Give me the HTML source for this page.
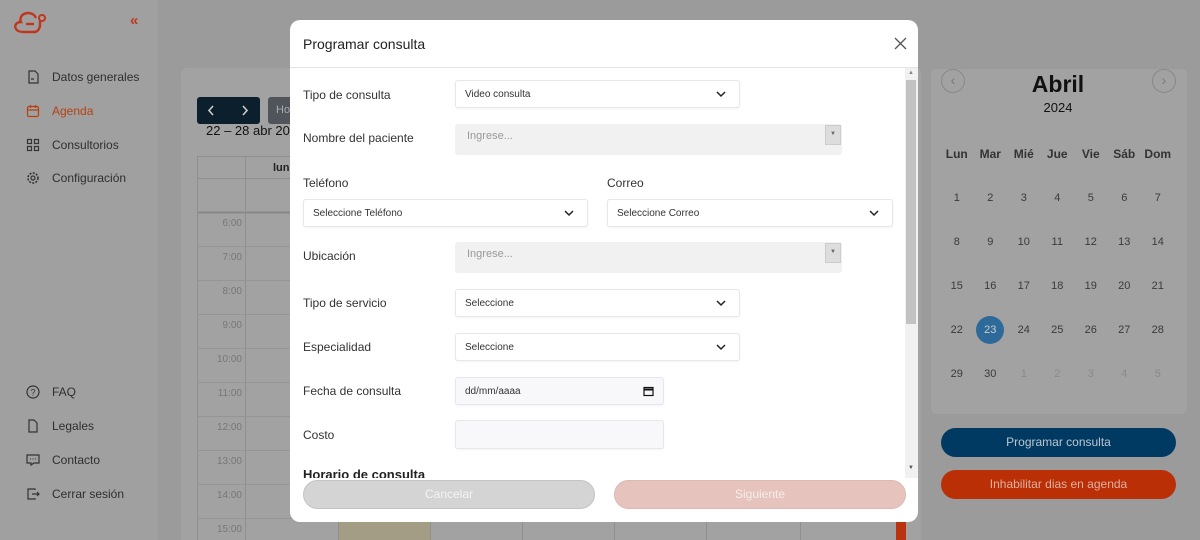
<!DOCTYPE html>
<html><head><meta charset="utf-8"><style>
*{box-sizing:border-box;margin:0;padding:0}
html,body{width:1200px;height:540px;overflow:hidden}
body{position:relative;font-family:"Liberation Sans",sans-serif;background:#9b9b9b}
.abs{position:absolute}
.side{left:0;top:0;width:158px;height:540px;background:#a0a0a0}
.nav{left:26px;font-size:12px;color:#2f2f2f;display:flex;align-items:center;gap:12px}
.nav svg{width:14px;height:14px}
.card{left:181px;top:68px;width:740px;height:472px;background:#a2a2a2;border-radius:6px 6px 0 0}
.modal{left:290px;top:20px;width:628px;height:502px;background:#fff;border-radius:10px;overflow:hidden}
.lbl{font-size:12px;color:#333}
.sel{border:1px solid #e6e6ec;border-radius:3px;background:#fff;font-size:10px;color:#333;display:flex;align-items:center;padding-left:9px;box-shadow:0 1px 2px rgba(0,0,0,.05)}
.chev{position:absolute;right:12px;top:50%;margin-top:-4px;width:12px;height:8px}
.inp{background:#f1f1f1;border-radius:3px;font-size:11px;color:#999;padding:6px 12px}
.dd{position:absolute;right:0;top:0;width:16px;height:20px;background:#ddd;border:1px solid #ccc}
.cal td{width:33.5px;text-align:center;font-size:11px;color:#3a3a3a;height:44px}
</style></head><body>
<div class="abs side"></div>
<svg class="abs" style="left:12px;top:10px" width="36" height="26" viewBox="0 0 36 26"><path d="M24 8 C22 3 16 2 12 4 C8 6 8 10 9 12 C4 12 2 16 4 19 C5 21 8 22 12 22 L22 22 C26 22 28 18 28 15 L28 11" fill="none" stroke="#c0361c" stroke-width="2.4"/><path d="M14 14 L22 14" stroke="#c0361c" stroke-width="2.4"/><circle cx="30" cy="8" r="3" fill="none" stroke="#c0361c" stroke-width="2"/></svg>
<div class="abs" style="left:130px;top:12px;color:#c0361c;font-size:15px;font-weight:bold">«</div>
<div class="abs nav" style="top:70px"><svg viewBox="0 0 14 14"><path d="M3 1h6l3 3v9H3z M5 9h3" fill="none" stroke="#333" stroke-width="1.2"/></svg>Datos generales</div>
<div class="abs nav" style="top:104px;color:#b64013"><svg viewBox="0 0 14 14"><rect x="1.5" y="2.5" width="11" height="10" rx="1.5" fill="none" stroke="#b64013" stroke-width="1.2"/><path d="M1.5 6h11M4.5 1v3M9.5 1v3" stroke="#b64013" stroke-width="1.2"/></svg>Agenda</div>
<div class="abs nav" style="top:138px"><svg viewBox="0 0 14 14"><g fill="none" stroke="#333" stroke-width="1.2"><rect x="1.5" y="1.5" width="4" height="4"/><rect x="8.5" y="1.5" width="4" height="4"/><rect x="1.5" y="8.5" width="4" height="4"/><rect x="8.5" y="8.5" width="4" height="4"/></g></svg>Consultorios</div>
<div class="abs nav" style="top:171px"><svg viewBox="0 0 14 14"><circle cx="7" cy="7" r="5" fill="none" stroke="#333" stroke-width="1.6" stroke-dasharray="2 1.3"/><circle cx="7" cy="7" r="2" fill="none" stroke="#333" stroke-width="1.2"/></svg>Configuración</div>
<div class="abs nav" style="top:385px"><svg viewBox="0 0 14 14"><circle cx="7" cy="7" r="6" fill="none" stroke="#333" stroke-width="1.2"/><text x="7" y="10.5" font-size="9" text-anchor="middle" fill="#333">?</text></svg>FAQ</div>
<div class="abs nav" style="top:419px"><svg viewBox="0 0 14 14"><path d="M3 1h5l3 3v9H3z" fill="none" stroke="#333" stroke-width="1.2"/></svg>Legales</div>
<div class="abs nav" style="top:453px"><svg viewBox="0 0 14 14"><path d="M1 2h12v8H8l-3 2v-2H1z" fill="none" stroke="#333" stroke-width="1.2"/><path d="M4 6h1M6.5 6h1M9 6h1" stroke="#333"/></svg>Contacto</div>
<div class="abs nav" style="top:487px"><svg viewBox="0 0 14 14"><path d="M9 3V2H2v10h7v-1M6 7h7M11 5l2 2-2 2" fill="none" stroke="#333" stroke-width="1.2"/></svg>Cerrar sesión</div>

<div class="abs card"></div>
<div class="abs" style="left:197px;top:97px;width:63px;height:27px;background:#0c1f2c;border-radius:3px"><svg class="abs" style="left:10px;top:8px" width="44" height="11" viewBox="0 0 44 11"><path d="M6 1L2 5.5 6 10M36 1l4 4.5-4 4.5" fill="none" stroke="#ccc" stroke-width="1.6"/></svg></div>
<div class="abs" style="left:268px;top:97px;width:30px;height:27px;background:#4f555b;border-radius:3px;color:#aaa;font-size:11px;padding:7px 8px">Ho</div>
<div class="abs" style="left:206px;top:123px;font-size:13px;color:#111">22 – 28 abr 20</div>
<svg class="abs" style="left:197px;top:156px" width="715" height="384">
<rect x="141" y="364" width="92" height="30" fill="#a39d86"/>
<rect x="699" y="364" width="10" height="30" fill="#b8330f"/>
<g stroke="#8f8f8f">
<line x1="0" y1="0.5" x2="715" y2="0.5"/><line x1="0" y1="22.5" x2="715" y2="22.5"/><line x1="0" y1="56.5" x2="715" y2="56.5" stroke="#888" stroke-width="2"/>
<line x1="0.5" y1="0" x2="0.5" y2="384"/><line x1="48.5" y1="0" x2="48.5" y2="384"/>
<line x1="141.5" y1="0" x2="141.5" y2="384"/><line x1="233.5" y1="0" x2="233.5" y2="384"/><line x1="325.5" y1="0" x2="325.5" y2="384"/><line x1="417.5" y1="0" x2="417.5" y2="384"/><line x1="509.5" y1="0" x2="509.5" y2="384"/><line x1="603.5" y1="0" x2="603.5" y2="384"/>
</g>
<g stroke="#959595">
<line x1="0" y1="90.5" x2="715" y2="90.5"/><line x1="0" y1="124.5" x2="715" y2="124.5"/><line x1="0" y1="158.5" x2="715" y2="158.5"/><line x1="0" y1="192.5" x2="715" y2="192.5"/><line x1="0" y1="226.5" x2="715" y2="226.5"/><line x1="0" y1="260.5" x2="715" y2="260.5"/><line x1="0" y1="294.5" x2="715" y2="294.5"/><line x1="0" y1="328.5" x2="715" y2="328.5"/><line x1="0" y1="362.5" x2="715" y2="362.5"/>
</g>
<g fill="#777" font-size="10" text-anchor="end" font-family="Liberation Sans">
<text x="45" y="70">6:00</text><text x="45" y="104">7:00</text><text x="45" y="138">8:00</text><text x="45" y="172">9:00</text><text x="45" y="206">10:00</text><text x="45" y="240">11:00</text><text x="45" y="274">12:00</text><text x="45" y="308">13:00</text><text x="45" y="342">14:00</text><text x="45" y="376">15:00</text></g>
<text x="76" y="15" font-size="11" font-weight="bold" fill="#222" font-family="Liberation Sans">lun</text>
</svg>

<div class="abs" style="left:930px;top:68px;width:258px;height:347px;background:#a2a2a2;border-radius:6px;border:1px solid #9a9a9a"></div>
<div class="abs" style="left:941px;top:69px;width:24px;height:24px;border:1px solid #888;border-radius:50%;color:#777;text-align:center;font-size:14px;line-height:21px">‹</div>
<div class="abs" style="left:1152px;top:69px;width:24px;height:24px;border:1px solid #888;border-radius:50%;color:#777;text-align:center;font-size:14px;line-height:21px">›</div>
<div class="abs" style="left:1008px;top:71px;width:100px;text-align:center;font-size:23px;color:#111;font-weight:bold">Abril</div>
<div class="abs" style="left:1018px;top:100px;width:80px;text-align:center;font-size:13px;color:#111">2024</div>
<table class="abs cal" style="left:940px;top:132px;border-collapse:collapse">
<tr style="font-weight:bold"><td style="font-size:12px;color:#333">Lun</td><td style="font-size:12px;color:#333">Mar</td><td style="font-size:12px;color:#333">Mié</td><td style="font-size:12px;color:#333">Jue</td><td style="font-size:12px;color:#333">Vie</td><td style="font-size:12px;color:#333">Sáb</td><td style="font-size:12px;color:#333">Dom</td></tr>
<tr><td>1</td><td>2</td><td>3</td><td>4</td><td>5</td><td>6</td><td>7</td></tr>
<tr><td>8</td><td>9</td><td>10</td><td>11</td><td>12</td><td>13</td><td>14</td></tr>
<tr><td>15</td><td>16</td><td>17</td><td>18</td><td>19</td><td>20</td><td>21</td></tr>
<tr><td>22</td><td><span style="display:inline-block;width:28px;height:28px;border-radius:50%;background:#2e6a99;color:#ccc;line-height:28px">23</span></td><td>24</td><td>25</td><td>26</td><td>27</td><td>28</td></tr>
<tr><td>29</td><td>30</td><td style="color:#8a8a8a">1</td><td style="color:#8a8a8a">2</td><td style="color:#8a8a8a">3</td><td style="color:#8a8a8a">4</td><td style="color:#8a8a8a">5</td></tr>
</table>
<div class="abs" style="left:941px;top:428px;width:235px;height:29px;background:#003a63;border-radius:15px;color:#bcc6cf;font-size:12px;text-align:center;line-height:29px">Programar consulta</div>
<div class="abs" style="left:941px;top:470px;width:235px;height:29px;background:#ba2f06;border-radius:15px;color:#e0b0a0;font-size:12px;text-align:center;line-height:29px">Inhabilitar dias en agenda</div>

<div class="abs modal">
<div class="abs" style="left:13px;top:16px;font-size:14px;color:#222">Programar consulta</div>
<svg class="abs" style="left:604px;top:17px" width="13" height="13" viewBox="0 0 13 13"><path d="M1 1l11 11M12 1L1 12" stroke="#555" stroke-width="1.3"/></svg>
<div class="abs" style="left:0;top:47px;width:628px;height:1px;background:#e5e5e5"></div>
<div class="abs" style="left:615px;top:48px;width:13px;height:410px;background:#f1f1f1"></div>
<div class="abs" style="left:616px;top:60px;width:10px;height:244px;background:#c2c2c2"></div>
<div class="abs" style="left:618px;top:50px;font-size:6px;color:#888">▲</div>
<div class="abs" style="left:618px;top:445px;font-size:6px;color:#555">▼</div>

<div class="abs lbl" style="left:13px;top:68px">Tipo de consulta</div>
<div class="abs sel" style="left:165px;top:60px;width:285px;height:28px">Video consulta<svg class="chev" viewBox="0 0 12 8"><path d="M2 2l4 4 4-4" fill="none" stroke="#222" stroke-width="1.5"/></svg></div>
<div class="abs lbl" style="left:13px;top:111px">Nombre del paciente</div>
<div class="abs inp" style="left:165px;top:104px;width:387px;height:31px">Ingrese...<div class="dd" style="right:1px;top:1px"><span style="font-size:6px;color:#666;position:absolute;left:4px;top:5px">▼</span></div></div>
<div class="abs lbl" style="left:13px;top:156px">Teléfono</div>
<div class="abs lbl" style="left:317px;top:156px">Correo</div>
<div class="abs sel" style="left:13px;top:179px;width:285px;height:28px">Seleccione Teléfono<svg class="chev" viewBox="0 0 12 8"><path d="M2 2l4 4 4-4" fill="none" stroke="#222" stroke-width="1.5"/></svg></div>
<div class="abs sel" style="left:317px;top:179px;width:286px;height:28px">Seleccione Correo<svg class="chev" viewBox="0 0 12 8"><path d="M2 2l4 4 4-4" fill="none" stroke="#222" stroke-width="1.5"/></svg></div>
<div class="abs lbl" style="left:13px;top:229px">Ubicación</div>
<div class="abs inp" style="left:165px;top:222px;width:387px;height:31px">Ingrese...<div class="dd" style="right:1px;top:1px"><span style="font-size:6px;color:#666;position:absolute;left:4px;top:5px">▼</span></div></div>
<div class="abs lbl" style="left:13px;top:276px">Tipo de servicio</div>
<div class="abs sel" style="left:165px;top:269px;width:285px;height:28px">Seleccione<svg class="chev" viewBox="0 0 12 8"><path d="M2 2l4 4 4-4" fill="none" stroke="#222" stroke-width="1.5"/></svg></div>
<div class="abs lbl" style="left:13px;top:320px">Especialidad</div>
<div class="abs sel" style="left:165px;top:313px;width:285px;height:28px">Seleccione<svg class="chev" viewBox="0 0 12 8"><path d="M2 2l4 4 4-4" fill="none" stroke="#222" stroke-width="1.5"/></svg></div>
<div class="abs lbl" style="left:13px;top:364px">Fecha de consulta</div>
<div class="abs sel" style="left:165px;top:357px;width:209px;height:28px;background:#f8f8fa">dd/mm/aaaa<svg class="abs" style="right:9px;top:8px" width="11" height="11" viewBox="0 0 11 11"><rect x="1" y="1.5" width="9" height="8" fill="none" stroke="#111" stroke-width="1.2"/><path d="M1 3.5h9" stroke="#111" stroke-width="2"/></svg></div>
<div class="abs lbl" style="left:13px;top:408px">Costo</div>
<div class="abs sel" style="left:165px;top:400px;width:209px;height:29px;background:#f8f8fa"></div>
<div class="abs" style="left:13px;top:446px;width:600px;height:12px;overflow:hidden"><div style="font-size:13px;color:#222;font-weight:bold;margin-top:1px">Horario de consulta</div></div>
<div class="abs" style="left:13px;top:460px;width:292px;height:29px;background:#d4d4d4;border:1px solid #c4c4c4;border-radius:15px;color:#f4f4f4;font-size:12px;text-align:center;line-height:27px">Cancelar</div>
<div class="abs" style="left:324px;top:460px;width:292px;height:29px;background:#e6c4bd;border:1px solid #dcb9b2;border-radius:15px;color:#f7ecea;font-size:12px;text-align:center;line-height:27px">Siguiente</div>
</div>
</body></html>
